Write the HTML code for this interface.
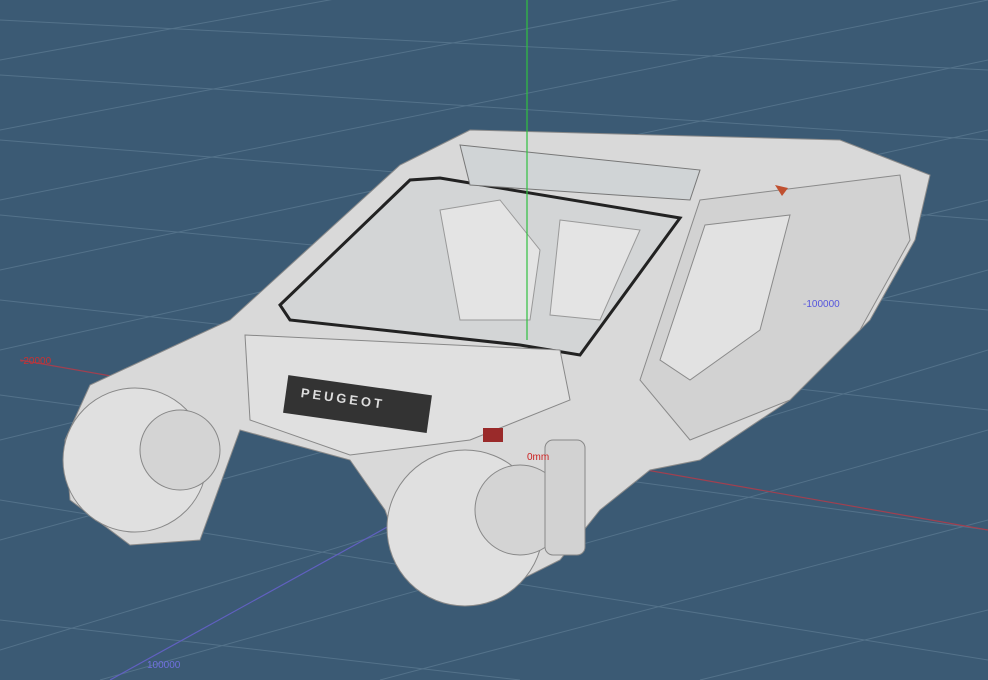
<!DOCTYPE html>
<html><head><style>html,body{margin:0;padding:0;background:#3b5a74;overflow:hidden}svg{display:block}</style></head>
<body>
<svg width="988" height="680" viewBox="0 0 988 680" xmlns="http://www.w3.org/2000/svg">
<rect width="988" height="680" fill="#3b5a74"/>
<g stroke="#5a7890" stroke-width="1" opacity="0.8">
<line x1="0" y1="60" x2="988" y2="-120"/><line x1="0" y1="130" x2="988" y2="-60"/>
<line x1="0" y1="200" x2="988" y2="0"/><line x1="0" y1="270" x2="988" y2="60"/>
<line x1="0" y1="350" x2="988" y2="130"/><line x1="0" y1="440" x2="988" y2="200"/>
<line x1="0" y1="540" x2="988" y2="270"/><line x1="0" y1="650" x2="988" y2="350"/>
<line x1="100" y1="680" x2="988" y2="430"/><line x1="380" y1="680" x2="988" y2="520"/>
<line x1="700" y1="680" x2="988" y2="610"/>
<line x1="0" y1="20" x2="988" y2="70"/><line x1="0" y1="75" x2="988" y2="140"/>
<line x1="0" y1="140" x2="988" y2="220"/><line x1="0" y1="215" x2="988" y2="310"/>
<line x1="0" y1="300" x2="988" y2="410"/><line x1="0" y1="395" x2="988" y2="530"/>
<line x1="0" y1="500" x2="988" y2="660"/><line x1="0" y1="620" x2="520" y2="680"/>
</g>
<line x1="20" y1="360" x2="988" y2="530" stroke="#a04050" stroke-width="1.2"/>
<line x1="110" y1="680" x2="400" y2="520" stroke="#6060c0" stroke-width="1.2"/>
<g fill="#d9d9d9" stroke="#8a8a8a" stroke-width="1">
<path d="M65,440 L90,385 L230,320 L400,165 L470,130 L840,140 L930,175 L915,240 L870,320 L790,400 L700,460 L650,470 L600,510 L560,560 L470,605 L410,580 L385,510 L350,460 L240,430 L200,540 L130,545 L70,500 Z"/>
<path d="M700,200 L900,175 L910,240 L860,330 L790,400 L690,440 L640,380 Z" fill="#d2d2d2"/>
<path d="M705,225 L790,215 L760,330 L690,380 L660,360 Z" fill="#e2e2e2"/>
</g>
<path d="M280,305 L410,180 L440,178 L680,218 L580,355 L520,345 L290,320 Z" fill="#d3d5d6" stroke="#222" stroke-width="3"/>
<g stroke="#999" fill="#e4e4e4"><path d="M440,210 L500,200 L540,250 L530,320 L460,320 Z"/><path d="M560,220 L640,230 L600,320 L550,315 Z"/></g>
<path d="M460,145 L700,170 L690,200 L470,185 Z" fill="#d0d4d6" stroke="#777"/>
<line x1="527" y1="0" x2="527" y2="340" stroke="#30c040" stroke-width="1.2"/>
<g fill="#e0e0e0" stroke="#888">
<path d="M245,335 L560,350 L570,400 L470,440 L350,455 L250,420 Z"/>
<circle cx="135" cy="460" r="72"/>
<circle cx="465" cy="528" r="78"/>
<circle cx="180" cy="450" r="40" fill="#d4d4d4"/>
<circle cx="520" cy="510" r="45" fill="#d4d4d4"/>
<rect x="545" y="440" width="40" height="115" rx="8" fill="#d2d2d2"/>
</g>
<rect x="285" y="385" width="145" height="38" fill="#333" transform="rotate(8 357 404)"/>
<text x="300" y="405" font-family="Liberation Sans, sans-serif" font-size="13" font-weight="bold" fill="#ddd" letter-spacing="3" transform="rotate(8 357 404)">PEUGEOT</text>
<rect x="483" y="428" width="20" height="14" fill="#9a2a2a"/>
<path d="M775,185 L788,188 L782,196 Z" fill="#c05030"/>
<g font-family="Liberation Sans, sans-serif" font-size="10">
<text x="803" y="307" fill="#5555dd">-100000</text>
<text x="527" y="460" fill="#cc2020">0mm</text>
<text x="147" y="668" fill="#7070e0">100000</text>
<text x="20" y="364" fill="#cc3030">-20000</text>
</g>
</svg>
</body></html>
